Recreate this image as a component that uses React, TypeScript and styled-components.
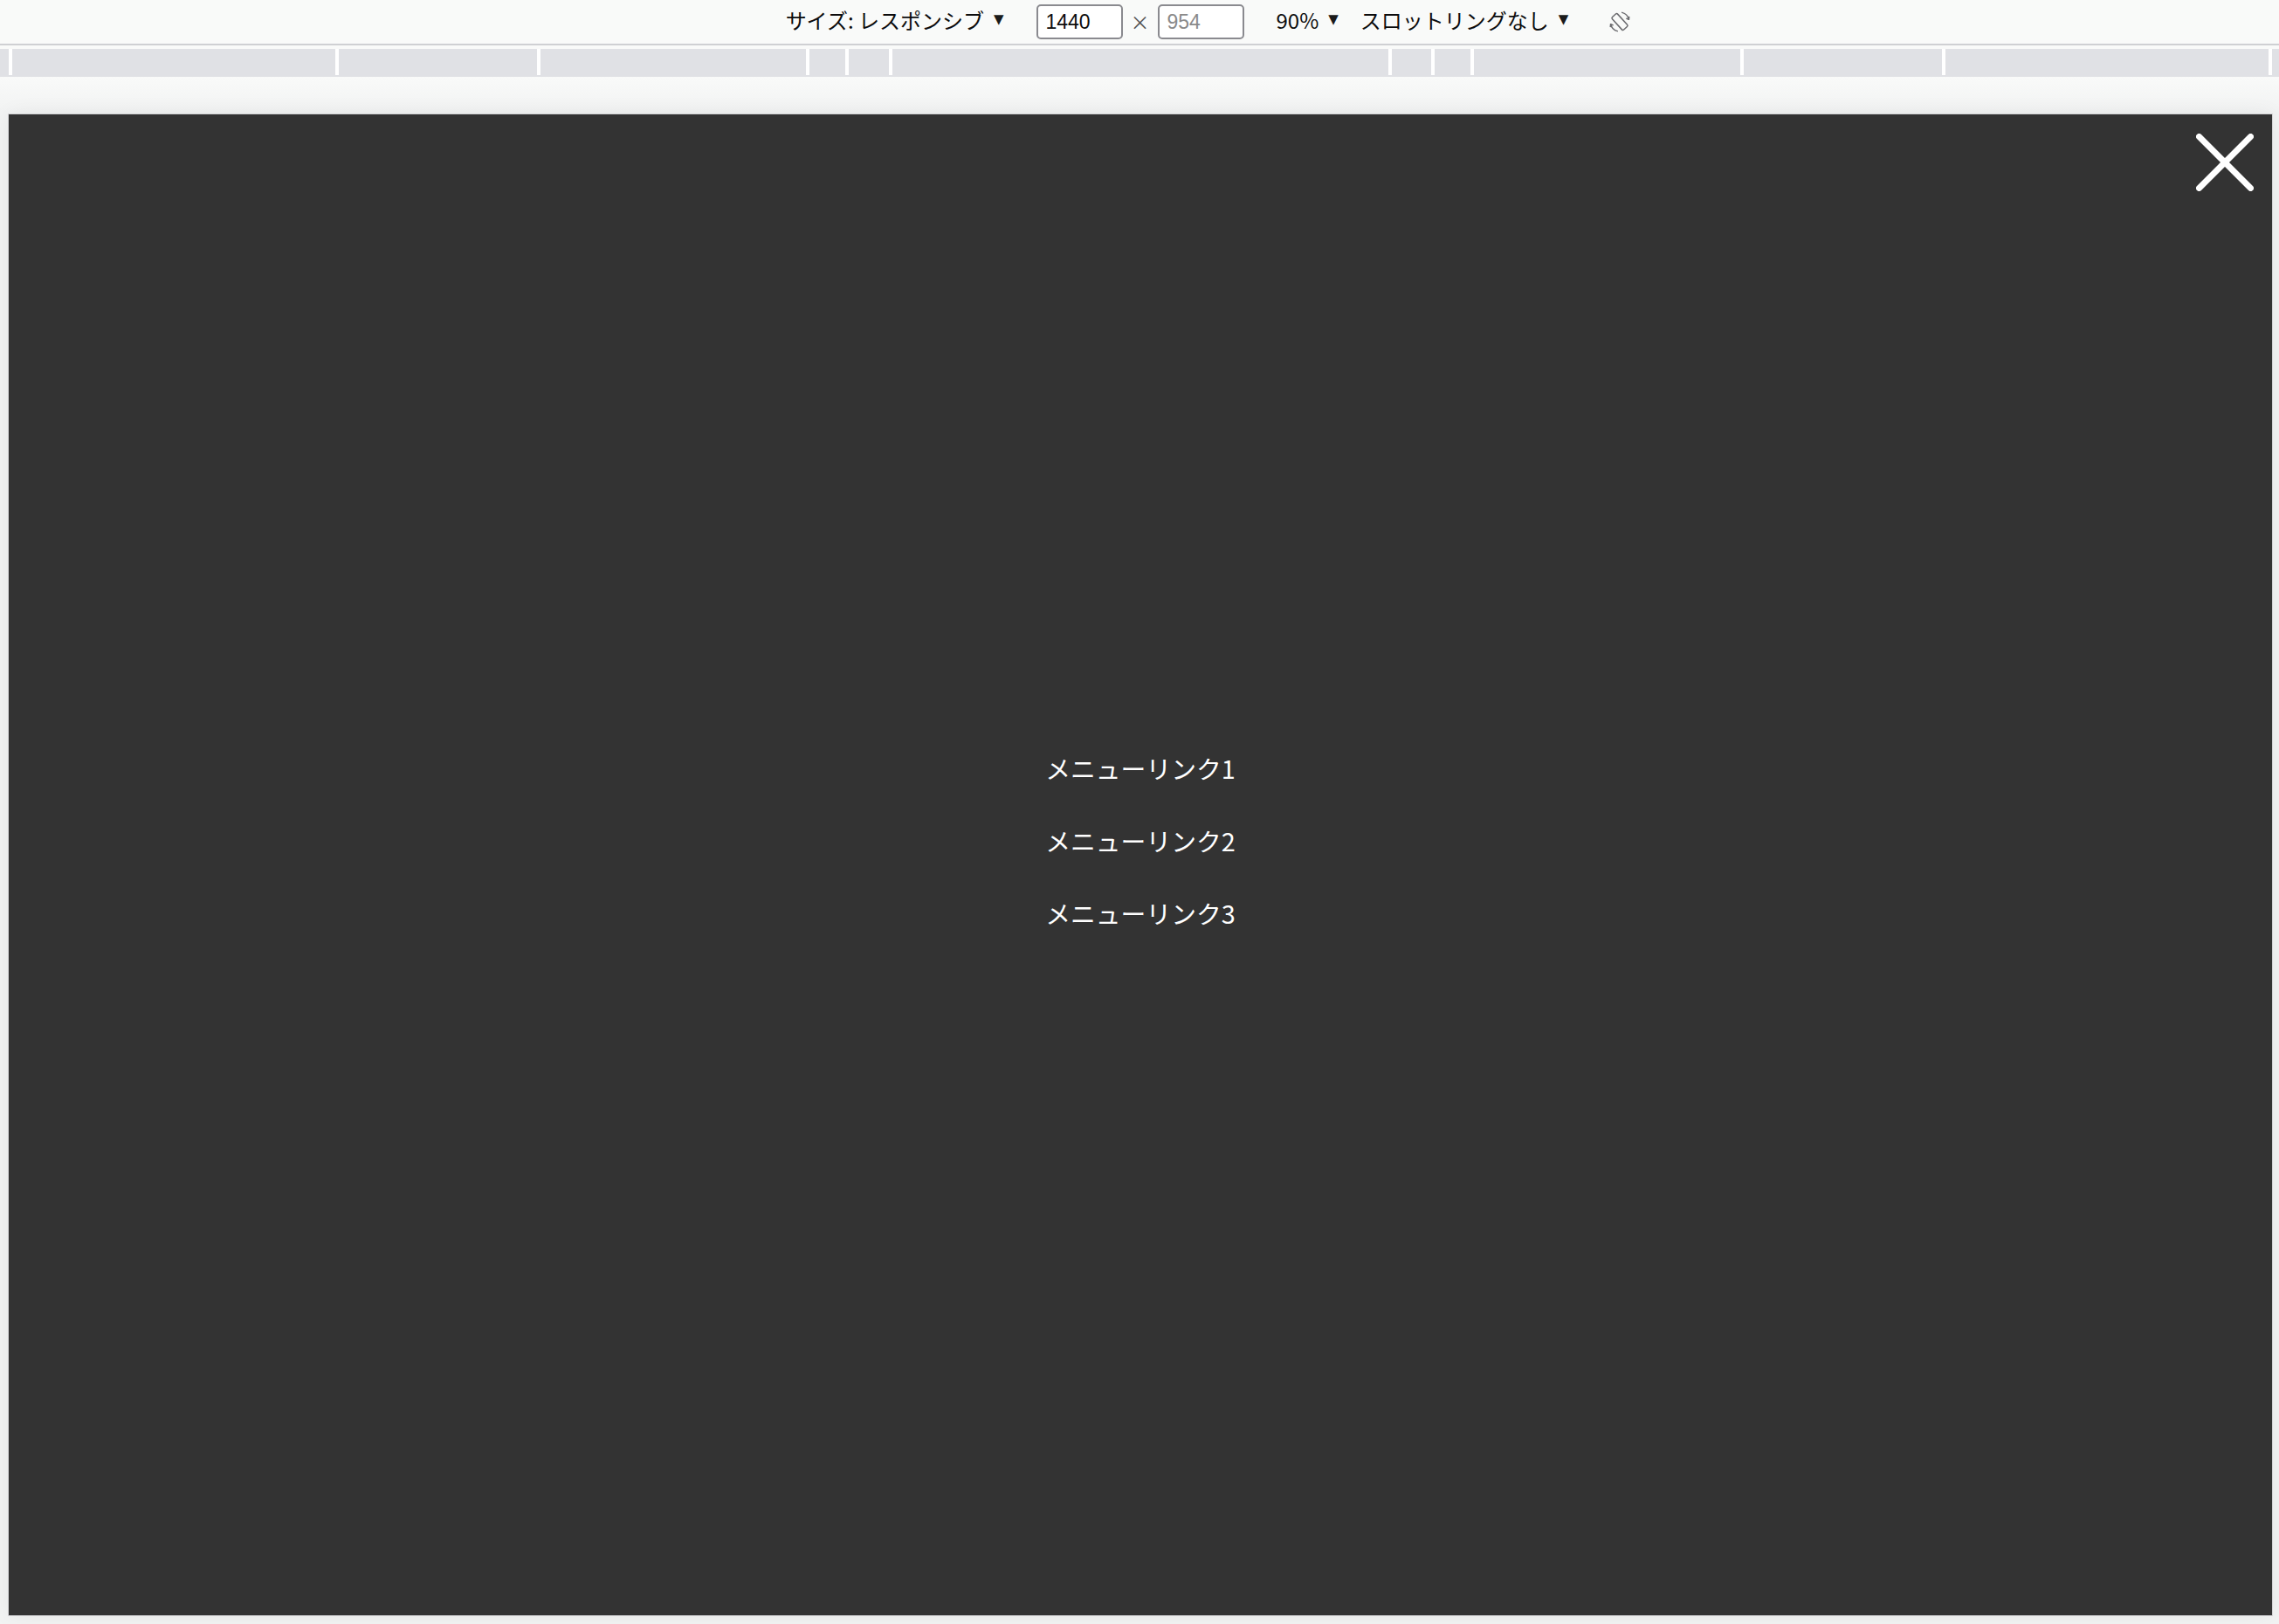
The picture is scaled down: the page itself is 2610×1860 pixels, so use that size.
import styled, { createGlobalStyle } from "styled-components";

const GlobalStyle = createGlobalStyle`
  html, body {
    margin: 0;
    padding: 0;
    background: #f9faf9;
  }
  body {
    font-family: "Noto Sans CJK JP", "Noto Sans", sans-serif;
    color: #0c0c0d;
  }
`;

const PAGE_WIDTH = 2610;
const VIEW_CENTER = 1306;
const SCALE = 1.8;
const BREAKPOINTS = [1440, 1024, 768, 425, 375, 320];
const MARKER_WIDTH = 4;

const MENU_ITEMS = ["メニューリンク1", "メニューリンク2", "メニューリンク3"];

const Page = styled.div`
  width: ${PAGE_WIDTH}px;
  height: 1860px;
  overflow: hidden;
  display: flex;
  flex-direction: column;
`;

const Toolbar = styled.header`
  height: 50px;
  display: flex;
  align-items: center;
  justify-content: center;
  padding-left: 160px;
  background: #f9faf9;
  border-bottom: 2px solid #cfd0d3;
  font-size: 24px;
  white-space: nowrap;
`;

const Label = styled.span<{ $before?: number; $after?: number }>`
  display: inline-flex;
  align-items: center;
  line-height: 1;
  padding-bottom: 5px;
  margin-left: ${(p) => p.$before ?? 0}px;
  margin-right: ${(p) => p.$after ?? 0}px;
`;

const Caret = styled.span`
  font-family: "DejaVu Sans", sans-serif;
  font-size: 15px;
  margin-left: 11px;
  color: #1a1a1a;
`;

const SizeInput = styled.div<{ $muted?: boolean }>`
  box-sizing: border-box;
  width: 99px;
  height: 40px;
  padding: 0 9px;
  display: flex;
  align-items: center;
  background: #fff;
  border: 2px solid #8a8a8f;
  border-radius: 5px;
  color: ${(p) => (p.$muted ? "#8a8a8a" : "#0c0c0d")};
  font-family: "Liberation Sans", "Noto Sans", sans-serif;
  font-size: 23px;
`;

const Times = styled.span`
  margin: 0 9px;
  padding-bottom: 2px;
  color: #555;
  font-size: 22px;
  line-height: 1;
`;

const RulerWrap = styled.div`
  padding-top: 4px;
`;

const Ruler = styled.div`
  height: 32px;
  display: flex;
  background: #e0e1e5;
`;

const Marker = styled.div`
  width: ${MARKER_WIDTH}px;
  height: 30px;
  background: #fff;
  flex: none;
`;

const Spacer = styled.div`
  flex: none;
`;

const Viewport = styled.main`
  flex: 1;
  padding: 43px 8px 0 10px;
  background: linear-gradient(#f9faf9, #f2f3f3 40px);
`;

const Frame = styled.div`
  position: relative;
  box-sizing: border-box;
  width: 2592px;
  height: 1719px;
  background: #333333;
  box-shadow: 0 0 0 1px #d4d4d6, 0 0 24px rgba(0, 0, 0, 0.06);
  display: flex;
  align-items: center;
  justify-content: center;
  padding-bottom: 57px;
`;

const CloseButton = styled.button`
  position: absolute;
  top: 22px;
  right: 21px;
  width: 66px;
  height: 66px;
  padding: 0;
  border: none;
  background: none;
  cursor: pointer;
  svg {
    display: block;
  }
`;

const Menu = styled.ul`
  list-style: none;
  margin: 0;
  padding: 0;
  display: flex;
  flex-direction: column;
  align-items: center;
  gap: 40px;
`;

const MenuLink = styled.a`
  display: block;
  color: #fff;
  text-decoration: none;
  font-family: "Noto Sans CJK JP", "Noto Sans", sans-serif;
  font-size: 28.8px;
  line-height: 43px;
`;

const RotateIcon = () => (
  <svg width="30" height="26" viewBox="0 0 24 24" fill="none" stroke="#6b6b6f" strokeWidth="1.4" strokeLinecap="round">
    <rect x="8.2" y="3" width="7.6" height="18" rx="1.4" transform="rotate(-42 12 12)" />
    <path d="M14.5 2.2 A10 10 0 0 1 21.6 9.4" />
    <path d="M21.6 9.4 L21.9 6.9 M21.6 9.4 L19.3 8.5" />
    <path d="M9.5 21.8 A10 10 0 0 1 2.4 14.6" />
    <path d="M2.4 14.6 L2.1 17.1 M2.4 14.6 L4.7 15.5" />
  </svg>
);

const CloseIcon = () => (
  <svg width="66" height="66" viewBox="0 0 66 66">
    <path d="M3.5 3.5 L62.5 62.5 M62.5 3.5 L3.5 62.5" stroke="#fff" strokeWidth="7" strokeLinecap="round" />
  </svg>
);

// markers sit just inside the edges of each breakpoint's viewport width
const BreakpointRuler = () => {
  const edges = BREAKPOINTS.flatMap((bp) => {
    const half = (bp / 2) * SCALE;
    return [VIEW_CENTER - half, VIEW_CENTER + half - MARKER_WIDTH];
  }).sort((a, b) => a - b);

  const parts: JSX.Element[] = [];
  let cursor = 0;
  edges.forEach((left, i) => {
    parts.push(<Spacer key={`s${i}`} style={{ width: left - cursor }} />);
    parts.push(<Marker key={`m${i}`} />);
    cursor = left + MARKER_WIDTH;
  });

  return (
    <RulerWrap>
      <Ruler>{parts}</Ruler>
    </RulerWrap>
  );
};

export default function App() {
  return (
    <>
      <GlobalStyle />
      <Page>
        <Toolbar>
          <Label $after={37}>
            サイズ: レスポンシブ<Caret>▼</Caret>
          </Label>
          <SizeInput>1440</SizeInput>
          <Times>×</Times>
          <SizeInput $muted>954</SizeInput>
          <Label $before={37} $after={25}>
            90%<Caret>▼</Caret>
          </Label>
          <Label $after={44}>
            スロットリングなし<Caret>▼</Caret>
          </Label>
          <RotateIcon />
        </Toolbar>
        <BreakpointRuler />
        <Viewport>
          <Frame>
            <CloseButton aria-label="閉じる">
              <CloseIcon />
            </CloseButton>
            <nav>
              <Menu>
                {MENU_ITEMS.map((item) => (
                  <li key={item}>
                    <MenuLink href="#">{item}</MenuLink>
                  </li>
                ))}
              </Menu>
            </nav>
          </Frame>
        </Viewport>
      </Page>
    </>
  );
}
